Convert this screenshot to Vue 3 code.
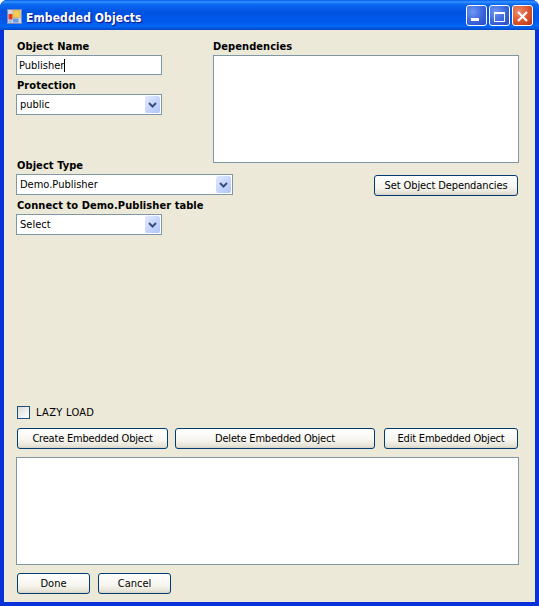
<script setup>
const topButtons = ['Create Embedded Object', 'Delete Embedded Object', 'Edit Embedded Object']
</script>

<template>
  <div class="window">
    <header class="titlebar">
      <svg class="app-icon" width="15" height="15" viewBox="0 0 15 15">
        <rect x="0.5" y="0.5" width="14" height="14" fill="#cfd6ea" stroke="#7f8db5" />
        <rect x="1.5" y="5" width="4" height="5.5" fill="#e23a24" />
        <rect x="6" y="1.5" width="7" height="7" fill="#f5cc52" stroke="#c9a23a" stroke-width="0.5" />
        <rect x="6" y="9.5" width="5.5" height="4" fill="#6f9be0" />
        <rect x="1.5" y="11.5" width="3.5" height="2" fill="#9fb6e0" />
      </svg>
      <span class="title">Embedded Objects</span>
      <div class="controls">
        <div class="ctl blue">
          <svg width="21" height="21" viewBox="0 0 21 21"><rect x="5" y="13" width="8" height="3" fill="#fff" /></svg>
        </div>
        <div class="ctl blue">
          <svg width="21" height="21" viewBox="0 0 21 21"><rect x="5.5" y="7.5" width="10" height="9" fill="none" stroke="#fff" /><rect x="5" y="7" width="11" height="2" fill="#fff" /></svg>
        </div>
        <div class="ctl red">
          <svg width="21" height="21" viewBox="0 0 21 21"><path d="M6 7l9 9M15 7l-9 9" stroke="#fff" stroke-width="2.2" fill="none" /></svg>
        </div>
      </div>
    </header>

    <main class="client">
      <section class="upper">
        <div class="left">
          <label class="label first">Object Name</label>
          <div class="input"><span>Publisher</span><i class="caret"></i></div>
          <label class="label">Protection</label>
          <div class="combo short">
            <span>public</span>
            <span class="arrow"><svg width="9" height="6" viewBox="0 0 9 6"><path d="M1 1l3.5 3.5L8 1" fill="none" stroke="#3a4f80" stroke-width="2" /></svg></span>
          </div>
          <label class="label type-label">Object Type</label>
          <div class="combo wide">
            <span>Demo.Publisher</span>
            <span class="arrow"><svg width="9" height="6" viewBox="0 0 9 6"><path d="M1 1l3.5 3.5L8 1" fill="none" stroke="#3a4f80" stroke-width="2" /></svg></span>
          </div>
          <label class="label">Connect to Demo.Publisher table</label>
          <div class="combo short">
            <span>Select</span>
            <span class="arrow"><svg width="9" height="6" viewBox="0 0 9 6"><path d="M1 1l3.5 3.5L8 1" fill="none" stroke="#3a4f80" stroke-width="2" /></svg></span>
          </div>
        </div>
        <div class="right">
          <label class="label first dep-label">Dependencies</label>
          <div class="box deps"></div>
          <button class="btn set">Set Object Dependancies</button>
        </div>
      </section>

      <div class="check-row">
        <span class="check"></span>
        <span class="lazy">LAZY LOAD</span>
      </div>

      <div class="actions">
        <button class="btn create">{{ topButtons[0] }}</button>
        <button class="btn delete">{{ topButtons[1] }}</button>
        <button class="btn edit">{{ topButtons[2] }}</button>
      </div>

      <div class="box log"></div>

      <div class="footer">
        <button class="btn small">Done</button>
        <button class="btn small">Cancel</button>
      </div>
    </main>
  </div>
</template>

<style>
html, body { margin: 0; background: #fff; }
</style>

<style scoped>
.window {
  width: 539px;
  height: 606px;
  box-sizing: border-box;
  display: flex;
  flex-direction: column;
  border-radius: 7px 7px 0 0;
  background: #0831d9;
  overflow: hidden;
  font-family: "DejaVu Sans Condensed", "DejaVu Sans", sans-serif;
  font-size: 11px;
  color: #000;
}
.titlebar {
  height: 30px;
  flex: none;
  display: flex;
  align-items: center;
  padding: 0 6px 0 7px;
  box-sizing: border-box;
  background: linear-gradient(180deg, #0058ee 0%, #3593ff 6%, #0a6af2 14%, #0053e1 40%, #0058ea 70%, #0066f5 88%, #0048c8 100%);
}
.app-icon { flex: none; margin-top: 2px; }
.title {
  margin-left: 4px;
  margin-top: 5px;
  color: #fff;
  font-weight: 700;
  font-size: 12px;
  letter-spacing: 0.1px;
  text-shadow: 1px 1px 1px #0f1089;
  white-space: nowrap;
}
.controls {
  margin-left: auto;
  margin-top: 1px;
  display: flex;
  gap: 2px;
}
.ctl {
  width: 21px;
  height: 21px;
  box-sizing: border-box;
  border: 1px solid #fff;
  border-radius: 3px;
  position: relative;
  overflow: hidden;
}
.ctl svg { position: absolute; left: -1px; top: -1px; }
.blue { background: radial-gradient(circle at 30% 30%, #6d97f4 0%, #3a66dd 55%, #2547c4 100%); }
.red { background: radial-gradient(circle at 30% 30%, #ea8a6c 0%, #d9552e 55%, #b83213 100%); }
.client {
  flex: 1;
  margin: 0 4px 4px;
  background: #ece9d8;
  display: flex;
  flex-direction: column;
  padding: 0 16px 0 12px;
}
.upper {
  display: flex;
  height: 375px;
  flex: none;
}
.left { width: 197px; flex: none; display: flex; flex-direction: column; align-items: flex-start; }
.right { width: 306px; flex: none; display: flex; flex-direction: column; }
.label {
  display: block;
  font-weight: 700;
  height: 16px;
  line-height: 18px;
  margin: 2px 0 1px 1px;
  letter-spacing: 0.07px;
  white-space: nowrap;
}
.label.first { margin-top: 9px; margin-bottom: 0; line-height: 16px; }
.label.dep-label { margin-left: 0; }
.type-label { margin-top: 42px; }
.input, .combo, .box {
  background: #fff;
  border: 1px solid #7f97a5;
  box-sizing: border-box;
}
.input {
  width: 146px;
  height: 20px;
  display: flex;
  align-items: center;
  padding-left: 2px;
}
.caret { display: inline-block; width: 1px; height: 13px; background: #000; }
.combo {
  height: 21px;
  display: flex;
  align-items: center;
  justify-content: space-between;
  padding: 1px 1px 1px 3px;
}
.short { width: 146px; }
.wide { width: 217px; }
.arrow {
  width: 15px;
  height: 17px;
  border-radius: 2px;
  background: linear-gradient(135deg, #e1eafe 0%, #c3d3fd 60%, #aec6f7 100%);
  display: flex;
  align-items: center;
  justify-content: center;
}
.deps { width: 306px; height: 108px; }
.btn {
  font: inherit;
  color: #000;
  height: 21px;
  padding: 0;
  box-sizing: border-box;
  border: 1px solid #003c74;
  border-radius: 3px;
  background: linear-gradient(180deg, #fff 0%, #f6f5ef 60%, #e6e3d6 90%, #d6d0c5 100%);
}
.set { width: 144px; margin-top: 12px; margin-left: 161px; letter-spacing: -0.1px; }
.check-row {
  display: flex;
  align-items: center;
  gap: 6px;
  height: 14px;
  margin-left: 1px;
}
.lazy { letter-spacing: 0.3px; }
.check {
  width: 13px;
  height: 13px;
  box-sizing: border-box;
  border: 1px solid #1c5180;
  background: linear-gradient(135deg, #dcdcd7 0%, #f4f4f0 70%, #fff 100%);
}
.actions { display: flex; margin-top: 9px; margin-left: 1px; }
.actions .btn { letter-spacing: -0.2px; }
.create { width: 151px; }
.delete { width: 200px; margin-left: 7px; }
.edit { width: 134px; margin-left: 9px; }
.log { width: 503px; height: 108px; margin-top: 8px; }
.footer { display: flex; gap: 8px; margin-top: 8px; margin-left: 1px; }
.small { width: 73px; }
</style>
